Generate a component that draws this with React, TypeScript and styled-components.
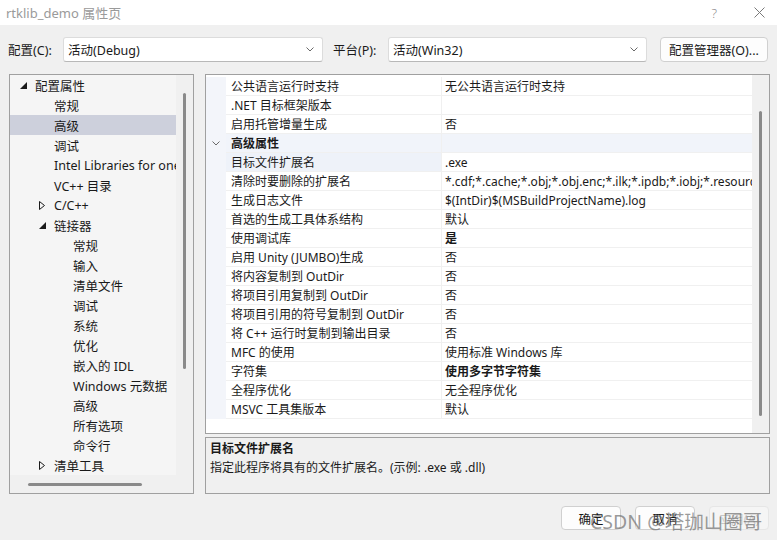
import React from 'react';
import styled, { createGlobalStyle } from 'styled-components';

const GlobalStyle = createGlobalStyle`
  html, body {
    margin: 0;
    padding: 0;
    background: #f0f0f0;
  }
  body {
    font-family: "Noto Sans", "Noto Sans CJK SC", sans-serif;
    font-size: 12px;
    color: #1a1a1a;
  }
`;

const Window = styled.div`
  position: relative;
  width: 777px;
  height: 540px;
  display: flex;
  flex-direction: column;
  background: #f0f0f0;
  overflow: hidden;
`;

const TitleBar = styled.div`
  height: 25px;
  flex-shrink: 0;
  display: flex;
  align-items: center;
  justify-content: space-between;
  background: #ffffff;
  padding: 0 12px 0 6px;
`;

const Title = styled.span`
  font-size: 13px;
  color: #9a9a9a;
`;

const TitleButtons = styled.div`
  display: flex;
  align-items: center;
  gap: 37px;
  color: #7a7a7a;
`;

const HelpMark = styled.span`
  font-size: 13px;
  font-weight: 300;
  color: #8a8a8a;
`;

const Toolbar = styled.div`
  height: 49px;
  flex-shrink: 0;
  display: flex;
  align-items: center;
  padding: 0 9px 0 8px;
`;

const FieldLabel = styled.span<{ $w: number }>`
  width: ${(p) => p.$w}px;
  font-size: 12.5px;
  flex-shrink: 0;
`;

const Select = styled.div<{ $w: number; $mr: number }>`
  width: ${(p) => p.$w}px;
  margin-right: ${(p) => p.$mr}px;
  height: 25px;
  box-sizing: border-box;
  display: flex;
  align-items: center;
  justify-content: space-between;
  padding: 0 8px 0 4px;
  background: #ffffff;
  border: 1px solid #dcdcdc;
  border-bottom-color: #b8b8b8;
  border-radius: 3px;
  font-size: 12.5px;
`;

const ToolButton = styled.div`
  width: 108px;
  height: 25px;
  box-sizing: border-box;
  display: flex;
  align-items: center;
  justify-content: center;
  background: #fdfdfd;
  border: 1px solid #d0d0d0;
  border-radius: 4px;
  font-size: 12.5px;
`;

const Body = styled.div`
  height: 420px;
  flex-shrink: 0;
  display: flex;
  padding: 0 7px 0 9px;
  gap: 11px;
`;

const TreePanel = styled.div`
  width: 185px;
  box-sizing: border-box;
  border: 1px solid #a0a0a0;
  display: flex;
  flex-direction: column;
`;

const TreeMain = styled.div`
  flex: 1;
  display: flex;
  min-height: 0;
`;

const TreeList = styled.div`
  width: 166px;
  background: #f5f5f5;
  overflow: hidden;
`;

const TreeRow = styled.div<{ $level: number; $selected?: boolean }>`
  height: 20px;
  display: flex;
  align-items: center;
  white-space: nowrap;
  padding-left: ${(p) => 25 + p.$level * 19}px;
  background: ${(p) => (p.$selected ? '#cdd0dc' : 'transparent')};
  position: relative;
  font-size: 12.5px;
`;

const TreeArrow = styled.span`
  position: absolute;
  width: 10px;
  height: 10px;
  display: flex;
  align-items: center;
  justify-content: center;
`;

const VScroll = styled.div<{ $top: number; $bottom: number }>`
  width: 17px;
  display: flex;
  flex-direction: column;
  align-items: center;
  padding-top: ${(p) => p.$top}px;
  padding-bottom: ${(p) => p.$bottom}px;
  box-sizing: border-box;
  background: #f0f0f0;
`;

const VThumb = styled.div`
  width: 3px;
  flex: 1;
  background: #8a8a8a;
  border-radius: 2px;
`;

const HScroll = styled.div`
  height: 18px;
  flex-shrink: 0;
  display: flex;
  align-items: center;
  padding-left: 18px;
  background: #f0f0f0;
`;

const HThumb = styled.div`
  width: 114px;
  height: 3px;
  background: #8a8a8a;
  border-radius: 2px;
`;

const RightCol = styled.div`
  flex: 1;
  display: flex;
  flex-direction: column;
  gap: 3px;
`;

const Grid = styled.div`
  height: 360px;
  box-sizing: border-box;
  border: 1px solid #a0a0a0;
  display: flex;
`;

const GridRows = styled.div`
  flex: 1;
  background: #ffffff;
  padding-top: 2px;
  overflow: hidden;
`;

const GridRow = styled.div<{ $category?: boolean }>`
  height: 19px;
  display: grid;
  grid-template-columns: 20px 215px 1px 1fr;
  background: ${(p) => (p.$category ? '#f1f4fa' : '#ffffff')};
`;

const Gutter = styled.div`
  background: #f3f5fa;
  display: flex;
  align-items: center;
  justify-content: center;
`;

const NameCell = styled.div<{ $bold?: boolean; $selected?: boolean }>`
  display: flex;
  align-items: center;
  padding-left: 5px;
  border-bottom: 1px solid #f0f0f0;
  font-weight: ${(p) => (p.$bold ? 700 : 400)};
  background: ${(p) => (p.$selected ? '#eef2f9' : 'transparent')};
  white-space: nowrap;
  overflow: hidden;
`;

const Sep = styled.div`
  background: #f0f0f0;
`;

const ValueCell = styled.div<{ $bold?: boolean }>`
  display: flex;
  align-items: center;
  padding-left: 3px;
  border-bottom: 1px solid #f0f0f0;
  font-weight: ${(p) => (p.$bold ? 700 : 400)};
  white-space: nowrap;
  overflow: hidden;
`;

const Desc = styled.div`
  flex: 1;
  box-sizing: border-box;
  border: 1px solid #a0a0a0;
  padding: 1px 4px;
  display: flex;
  flex-direction: column;
`;

const DescTitle = styled.div`
  font-weight: 700;
  line-height: 19px;
`;

const DescText = styled.div`
  line-height: 19px;
`;

const Footer = styled.div`
  flex: 1;
  display: flex;
  justify-content: flex-end;
  align-items: flex-start;
  gap: 14px;
  padding: 12px 8px 0 0;
`;

const DialogButton = styled.div<{ $disabled?: boolean }>`
  width: 60px;
  height: 24px;
  box-sizing: border-box;
  display: flex;
  align-items: center;
  justify-content: center;
  border-radius: 4px;
  border: 1px solid ${(p) => (p.$disabled ? '#e6e6e6' : '#d0d0d0')};
  background: ${(p) => (p.$disabled ? '#f5f5f5' : '#fdfdfd')};
  color: ${(p) => (p.$disabled ? '#c8c8c8' : '#1a1a1a')};
  font-size: 12.5px;
`;

const Watermark = styled.div`
  position: absolute;
  left: 590px;
  top: 506px;
  font-size: 19.5px;
  color: rgba(110, 110, 110, 0.7);
  white-space: nowrap;
  pointer-events: none;
`;

const Chevron = () => (
  <svg width="8" height="5" viewBox="0 0 8 5">
    <path d="M0.5 0.5 L4 4 L7.5 0.5" fill="none" stroke="#6a6a6a" strokeWidth="1" />
  </svg>
);

const CloseIcon = () => (
  <svg width="11" height="11" viewBox="0 0 11 11">
    <path d="M0.5 0.5 L10.5 10.5 M10.5 0.5 L0.5 10.5" stroke="#7a7a7a" strokeWidth="1" />
  </svg>
);

const ExpandedArrow = () => (
  <svg width="7" height="7" viewBox="0 0 7 7">
    <path d="M7 0 L7 7 L0 7 Z" fill="#1a1a1a" />
  </svg>
);

const CollapsedArrow = () => (
  <svg width="6" height="9" viewBox="0 0 6 9">
    <path d="M0.5 0.5 L5.5 4.5 L0.5 8.5 Z" fill="none" stroke="#1a1a1a" strokeWidth="1" />
  </svg>
);

type TreeItem = { label: string; level: number; arrow?: 'open' | 'closed'; selected?: boolean };

const TREE: TreeItem[] = [
  { label: '配置属性', level: 0, arrow: 'open' },
  { label: '常规', level: 1 },
  { label: '高级', level: 1, selected: true },
  { label: '调试', level: 1 },
  { label: 'Intel Libraries for oneAPI', level: 1 },
  { label: 'VC++ 目录', level: 1 },
  { label: 'C/C++', level: 1, arrow: 'closed' },
  { label: '链接器', level: 1, arrow: 'open' },
  { label: '常规', level: 2 },
  { label: '输入', level: 2 },
  { label: '清单文件', level: 2 },
  { label: '调试', level: 2 },
  { label: '系统', level: 2 },
  { label: '优化', level: 2 },
  { label: '嵌入的 IDL', level: 2 },
  { label: 'Windows 元数据', level: 2 },
  { label: '高级', level: 2 },
  { label: '所有选项', level: 2 },
  { label: '命令行', level: 2 },
  { label: '清单工具', level: 1, arrow: 'closed' },
];

type Prop = { name: string; value?: string; bold?: boolean; category?: boolean; selected?: boolean };

const PROPS: Prop[] = [
  { name: '公共语言运行时支持', value: '无公共语言运行时支持' },
  { name: '.NET 目标框架版本', value: '' },
  { name: '启用托管增量生成', value: '否' },
  { name: '高级属性', category: true },
  { name: '目标文件扩展名', value: '.exe', selected: true },
  { name: '清除时要删除的扩展名', value: '*.cdf;*.cache;*.obj;*.obj.enc;*.ilk;*.ipdb;*.iobj;*.resources;*.tlb' },
  { name: '生成日志文件', value: '$(IntDir)$(MSBuildProjectName).log' },
  { name: '首选的生成工具体系结构', value: '默认' },
  { name: '使用调试库', value: '是', bold: true },
  { name: '启用 Unity (JUMBO)生成', value: '否' },
  { name: '将内容复制到 OutDir', value: '否' },
  { name: '将项目引用复制到 OutDir', value: '否' },
  { name: '将项目引用的符号复制到 OutDir', value: '否' },
  { name: '将 C++ 运行时复制到输出目录', value: '否' },
  { name: 'MFC 的使用', value: '使用标准 Windows 库' },
  { name: '字符集', value: '使用多字节字符集', bold: true },
  { name: '全程序优化', value: '无全程序优化' },
  { name: 'MSVC 工具集版本', value: '默认' },
];

export default function App() {
  return (
    <Window>
      <GlobalStyle />
      <TitleBar>
        <Title>rtklib_demo 属性页</Title>
        <TitleButtons>
          <HelpMark>?</HelpMark>
          <CloseIcon />
        </TitleButtons>
      </TitleBar>

      <Toolbar>
        <FieldLabel $w={55}>配置(C):</FieldLabel>
        <Select $w={260} $mr={10}>
          <span>活动(Debug)</span>
          <Chevron />
        </Select>
        <FieldLabel $w={55}>平台(P):</FieldLabel>
        <Select $w={259} $mr={13}>
          <span>活动(Win32)</span>
          <Chevron />
        </Select>
        <ToolButton>配置管理器(O)...</ToolButton>
      </Toolbar>

      <Body>
        <TreePanel>
          <TreeMain>
            <TreeList>
              {TREE.map((item, i) => (
                <TreeRow key={i} $level={item.level} $selected={item.selected}>
                  {item.arrow && (
                    <TreeArrow style={{ left: 8 + item.level * 19 }}>
                      {item.arrow === 'open' ? <ExpandedArrow /> : <CollapsedArrow />}
                    </TreeArrow>
                  )}
                  {item.label}
                </TreeRow>
              ))}
            </TreeList>
            <VScroll $top={18} $bottom={106}>
              <VThumb />
            </VScroll>
          </TreeMain>
          <HScroll>
            <HThumb />
          </HScroll>
        </TreePanel>

        <RightCol>
          <Grid>
            <GridRows>
              {PROPS.map((p, i) =>
                p.category ? (
                  <GridRow key={i} $category>
                    <Gutter>
                      <Chevron />
                    </Gutter>
                    <NameCell $bold>{p.name}</NameCell>
                    <Sep />
                    <ValueCell />
                  </GridRow>
                ) : (
                  <GridRow key={i}>
                    <Gutter />
                    <NameCell $selected={p.selected}>{p.name}</NameCell>
                    <Sep />
                    <ValueCell $bold={p.bold}>{p.value}</ValueCell>
                  </GridRow>
                )
              )}
            </GridRows>
            <VScroll $top={36} $bottom={17}>
              <VThumb />
            </VScroll>
          </Grid>
          <Desc>
            <DescTitle>目标文件扩展名</DescTitle>
            <DescText>指定此程序将具有的文件扩展名。(示例: .exe 或 .dll)</DescText>
          </Desc>
        </RightCol>
      </Body>

      <Footer>
        <DialogButton>确定</DialogButton>
        <DialogButton>取消</DialogButton>
        <DialogButton $disabled>应用(A)</DialogButton>
      </Footer>

      <Watermark>CSDN @塔珈山圈哥</Watermark>
    </Window>
  );
}
